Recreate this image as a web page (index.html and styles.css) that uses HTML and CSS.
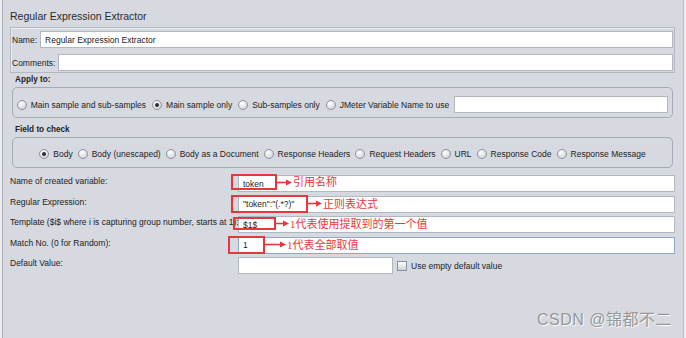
FILE: index.html
```html
<!DOCTYPE html>
<html lang="en">

<head>
  <meta charset="UTF-8" />
  <title>Regular Expression Extractor</title>
  <link rel="stylesheet" href="styles.css">
</head>

<body>
  <div class="panel">
    <div class="title">Regular Expression Extractor</div>

    <div class="name-box">
      <div class="line">
        <span class="lbl">Name:</span>
        <input class="field" value="Regular Expression Extractor" />
      </div>
      <div class="line">
        <span class="lbl">Comments:</span>
        <input class="field" value="" />
      </div>
    </div>

    <div class="group-title">Apply to:</div>
    <div class="group apply">
      <span class="opt"><i class="radio"></i>Main sample and sub-samples</span>
      <span class="opt"><i class="radio on"></i>Main sample only</span>
      <span class="opt"><i class="radio"></i>Sub-samples only</span>
      <span class="opt"><i class="radio"></i>JMeter Variable Name to use<input class="field jvar" value="" /></span>
    </div>

    <div class="group-title second">Field to check</div>
    <div class="group fields">
      <span class="opt"><i class="radio on"></i>Body</span>
      <span class="opt"><i class="radio"></i>Body (unescaped)</span>
      <span class="opt"><i class="radio"></i>Body as a Document</span>
      <span class="opt"><i class="radio"></i>Response Headers</span>
      <span class="opt"><i class="radio"></i>Request Headers</span>
      <span class="opt"><i class="radio"></i>URL</span>
      <span class="opt"><i class="radio"></i>Response Code</span>
      <span class="opt"><i class="radio"></i>Response Message</span>
    </div>

    <div class="params">
      <div class="plabel">Name of created variable:</div>
      <div class="pfield">
        <input class="field" value="token" />
        <div class="note n1">
          <span class="mark"></span>
          <svg width="16" height="7" viewBox="0 0 16 7"><path d="M0 3.5H10" stroke="#e5383c" stroke-width="1.6"/><path d="M9 0.5L15 3.5L9 6.5Z" fill="#e5383c"/></svg>
          <span>引用名称</span>
        </div>
      </div>

      <div class="plabel">Regular Expression:</div>
      <div class="pfield">
        <input class="field" value="&quot;token&quot;:&quot;(.*?)&quot;" />
        <div class="note n2">
          <span class="mark"></span>
          <svg width="15" height="7" viewBox="0 0 15 7"><path d="M0 3.5H9" stroke="#e5383c" stroke-width="1.6"/><path d="M8 0.5L14 3.5L8 6.5Z" fill="#e5383c"/></svg>
          <span>正则表达式</span>
        </div>
      </div>

      <div class="plabel">Template ($i$ where i is capturing group number, starts at 1):</div>
      <div class="pfield">
        <input class="field" value="$1$" />
        <div class="note n3">
          <span class="mark"></span>
          <svg width="14" height="7" viewBox="0 0 14 7"><path d="M0 3.5H8" stroke="#e5383c" stroke-width="1.6"/><path d="M7 0.5L13 3.5L7 6.5Z" fill="#e5383c"/></svg>
          <span>1代表使用提取到的第一个值</span>
        </div>
      </div>

      <div class="plabel">Match No. (0 for Random):</div>
      <div class="pfield">
        <input class="field focus" value="1" />
        <div class="note n4">
          <span class="mark"></span>
          <svg width="22" height="7" viewBox="0 0 22 7"><path d="M0 3.5H16" stroke="#e5383c" stroke-width="1.6"/><path d="M15 0.5L21 3.5L15 6.5Z" fill="#e5383c"/></svg>
          <span>1代表全部取值</span>
        </div>
      </div>

      <div class="plabel">Default Value:</div>
      <div class="pfield short">
        <input class="field" value="" />
        <i class="check"></i>
        <span>Use empty default value</span>
      </div>
    </div>

    <div class="watermark">CSDN @锦都不二</div>
  </div>
</body>

</html>
```

FILE: styles.css
```css
body {
  margin: 0;
  background: #eceef2;
  font-family: "Liberation Sans", Arial, sans-serif;
  font-size: 8.5px;
  color: #222;
}

.panel {
  position: relative;
  margin-left: 2px;
  width: 682px;
  height: 338px;
  box-sizing: border-box;
  padding-top: 9px;
  border-left: 1px solid #a9adb5;
  border-right: 1px solid #b9bdc5;
  background: #d6d9e0;
}

.title {
  margin-left: 7px;
  font-size: 10.5px;
  line-height: 14px;
  color: #2a2a2a;
}

.field {
  box-sizing: border-box;
  height: 17px;
  margin: 0;
  padding: 0 4px;
  border: 1px solid #b2b6be;
  background: #fff;
  font-family: inherit;
  font-size: 8.5px;
  color: #222;
  outline: none;
}

.field.focus {
  border-color: #8fa7c9;
}

.name-box {
  margin: 4px 8px 0 7px;
  padding: 3px 1px 1px 1px;
  border: 1px solid #b3b7bf;
  box-shadow: inset 1px 1px 0 #e9ebef;
}

.line {
  display: flex;
  align-items: center;
  gap: 3px;
  height: 17px;
}

.line + .line {
  margin-top: 6px;
}

.line .field {
  flex: 1;
}

.group-title {
  margin: 1px 0 0 12px;
  line-height: 12px;
  font-weight: bold;
  font-size: 8.2px;
}

.group-title.second {
  margin-top: 6px;
}

.group {
  display: flex;
  align-items: center;
  justify-content: center;
  height: 17px;
  margin: 1px 10px 0 9px;
  border: 1px solid #a6aab2;
  border-radius: 5px;
}

.group.apply {
  gap: 6px;
  padding: 8px 0 4px;
}

.group.fields {
  gap: 5px;
  padding: 7px 0 5px;
}

.opt {
  display: flex;
  align-items: center;
  gap: 4px;
  white-space: nowrap;
}

.radio {
  position: relative;
  width: 10px;
  height: 10px;
  box-sizing: border-box;
  border: 1px solid #8e929a;
  border-radius: 50%;
  background: radial-gradient(circle at 35% 30%, #fff, #cdd1d8 85%);
}

.radio.on::after {
  content: "";
  position: absolute;
  left: 2px;
  top: 2px;
  width: 4px;
  height: 4px;
  border-radius: 50%;
  background: #2b2b2b;
}

.jvar {
  width: 214px;
  margin-left: 1px;
}

.params {
  display: grid;
  grid-template-columns: 228px 1fr;
  row-gap: 3.5px;
  margin: 7px 8px 0 7px;
}

.plabel {
  line-height: 12px;
  white-space: nowrap;
  overflow: hidden;
}

.pfield {
  position: relative;
  height: 17px;
}

.pfield .field {
  width: 100%;
}

.pfield.short {
  display: flex;
  align-items: center;
}

.pfield.short .field {
  width: 155px;
}

.check {
  width: 10px;
  height: 10px;
  box-sizing: border-box;
  margin: 0 4px;
  border: 1px solid #8e929a;
  background: linear-gradient(#fdfdfd, #cdd1d8);
}

.note {
  position: absolute;
  display: flex;
  align-items: center;
  white-space: nowrap;
  color: #e8383c;
  font-family: "Liberation Serif", "Noto Sans CJK SC", serif;
  font-size: 11px;
  line-height: 12px;
}

.note svg {
  display: block;
}

.mark {
  box-sizing: border-box;
  border: 2px solid #e5383c;
}

.n1 {
  left: -7px;
  top: -1px;
}

.n1 .mark {
  width: 46px;
  height: 16px;
}

.n2 {
  left: -7px;
  top: -1px;
}

.n2 .mark {
  width: 77px;
  height: 18px;
}

.n3 {
  left: -5px;
  top: 1px;
}

.n3 .mark {
  width: 43px;
  height: 13px;
}

.n4 {
  left: -10px;
  top: -1px;
}

.n4 .mark {
  width: 37px;
  height: 18px;
}

.watermark {
  position: absolute;
  right: 11px;
  bottom: 10px;
  font-family: "Liberation Sans", "Noto Sans CJK SC", sans-serif;
  font-size: 16px;
  line-height: 16px;
  letter-spacing: 0.5px;
  color: #979797;
  text-shadow: 1px 1px 1px #fff;
}
```
